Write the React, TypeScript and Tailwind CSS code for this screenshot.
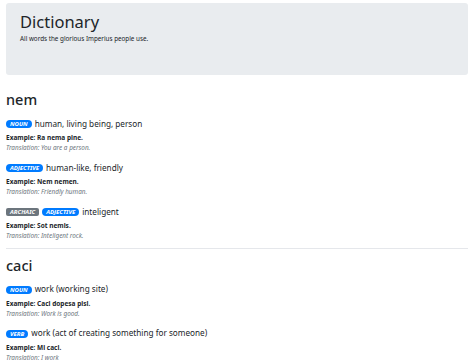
import React from 'react';

type Sense = {
  tags: { label: string; kind: 'pos' | 'note' }[];
  meaning: string;
  example: string;
  translation: string;
};

type Word = { word: string; senses: Sense[] };

const WORDS: Word[] = [
  {
    word: 'nem',
    senses: [
      { tags: [{ label: 'noun', kind: 'pos' }], meaning: 'human, living being, person', example: 'Ra nema pine.', translation: 'You are a person.' },
      { tags: [{ label: 'adjective', kind: 'pos' }], meaning: 'human-like, friendly', example: 'Nem nemen.', translation: 'Friendly human.' },
      {
        tags: [
          { label: 'archaic', kind: 'note' },
          { label: 'adjective', kind: 'pos' },
        ],
        meaning: 'inteligent',
        example: 'Sot nemis.',
        translation: 'Inteligent rock.',
      },
    ],
  },
  {
    word: 'caci',
    senses: [
      { tags: [{ label: 'noun', kind: 'pos' }], meaning: 'work (working site)', example: 'Caci dopesa pisi.', translation: 'Work is good.' },
      { tags: [{ label: 'verb', kind: 'pos' }], meaning: 'work (act of creating something for someone)', example: 'Mi caci.', translation: 'I work' },
    ],
  },
];

function Tag({ label, kind }: { label: string; kind: 'pos' | 'note' }) {
  return (
    <span
      className={`inline-flex items-center h-[8px] px-[4px] text-[6px] font-bold italic uppercase text-white leading-none ${
        kind === 'pos' ? 'bg-[#007bff] rounded-full' : 'bg-[#6c757d] rounded-[2px]'
      }`}
    >
      {label}
    </span>
  );
}

function Entry({ sense }: { sense: Sense }) {
  return (
    <div className="mb-[9px]">
      <div className="flex items-center gap-[3px] h-[12px] text-[8.2px] text-[#212529]">
        {sense.tags.map((t) => (
          <Tag key={t.label} label={t.label} kind={t.kind} />
        ))}
        <span>{sense.meaning}</span>
      </div>
      <div className="mt-[3px] leading-[10px] text-[6.5px] font-bold text-[#212529]">Example: {sense.example}</div>
      <div className="leading-[10px] text-[6.4px] italic text-[#6c757d]">Translation: {sense.translation}</div>
    </div>
  );
}

export default function App() {
  return (
    <div className="min-h-screen bg-white px-[6px] pt-[3px] font-['Noto_Sans',sans-serif] text-[#212529]">
      <div className="h-[72px] bg-[#e9ecef] rounded-[3px] px-[14px] pt-[8px]">
        <h1 className="text-[16.5px] leading-[22px]">Dictionary</h1>
        <p className="text-[6.3px] leading-[10px] mt-[1px]">All words the glorious Imperius people use.</p>
      </div>

      {WORDS.map((w, i) => (
        <section key={w.word}>
          {i > 0 && <hr className="mt-[-2.5px] border-0 border-t border-[#e5e7eb]" />}
          <h2 className={`text-[14.5px] leading-[20px] font-medium ${i === 0 ? 'mt-[14px]' : 'mt-[6px]'} mb-[9px]`}>{w.word}</h2>
          {w.senses.map((s, j) => (
            <Entry key={j} sense={s} />
          ))}
        </section>
      ))}
    </div>
  );
}
